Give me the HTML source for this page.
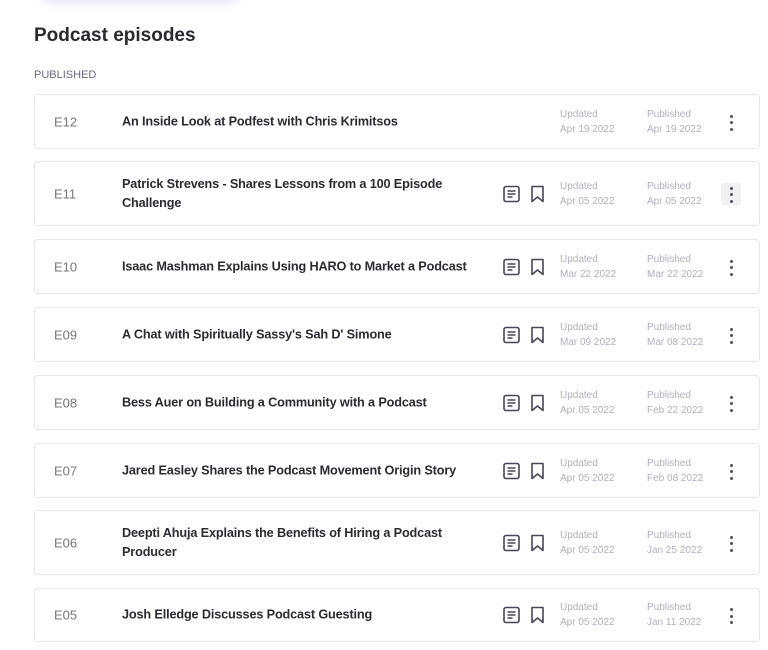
<!DOCTYPE html>
<html><head><meta charset="utf-8"><style>
body{margin:0;width:768px;height:650px;background:#fff;font-family:"Liberation Sans",sans-serif;position:relative;overflow:hidden}
.blob{position:absolute;left:40px;top:-20px;width:200px;height:20px;border-radius:10px;box-shadow:0 2px 10px rgba(150,130,230,.25);background:#fff}
h1{position:absolute;left:34px;top:25px;margin:0;font-size:19px;font-weight:bold;color:#2a2830}
.pub{position:absolute;left:34px;top:69px;font-size:11px;color:#6c6880}
.card{position:absolute;left:34px;width:726px;border:1px solid #e6e5ea;border-radius:4px;box-sizing:border-box;background:#fff}
.num{position:absolute;left:19px;top:50%;transform:translateY(-50%);font-size:13px;color:#777}
.title{position:absolute;left:87px;top:50%;transform:translateY(-50%);font-size:12.7px;letter-spacing:-0.15px;font-weight:bold;color:#2c2a33;line-height:19px;width:340px}
.ic{position:absolute;left:468px;top:50%;margin-top:-9px}
.d{position:absolute;top:50%;transform:translateY(-50%);font-size:10px;color:#b3afbd;line-height:15px}
.dots{position:absolute;left:686px;top:50%;margin-top:-11px;width:20px;height:22px;border-radius:3px}
.dots i{display:block;width:3px;height:3px;background:#555060;border-radius:50%;margin:3.5px auto 0}
.dots i:first-child{margin-top:4px}
</style></head><body>
<div class="blob"></div>
<h1>Podcast episodes</h1>
<div class="pub">PUBLISHED</div>

<div class="card" style="top:94px;height:55px"><div class="num">E12</div><div class="title">An Inside Look at Podfest with Chris Krimitsos</div><div class="d" style="left:525px">Updated<br>Apr 19 2022</div><div class="d" style="left:612px">Published<br>Apr 19 2022</div><div class="dots"><i></i><i></i><i></i></div></div>

<div class="card" style="top:161px;height:65px"><div class="num">E11</div><div class="title">Patrick Strevens - Shares Lessons from a 100 Episode Challenge</div>ICONS<div class="d" style="left:525px">Updated<br>Apr 05 2022</div><div class="d" style="left:612px">Published<br>Apr 05 2022</div><div class="dots" style="background:#f1f0f3"><i></i><i></i><i></i></div></div>

<div class="card" style="top:239px;height:55px"><div class="num">E10</div><div class="title" style="width:380px">Isaac Mashman Explains Using HARO to Market a Podcast</div>ICONS<div class="d" style="left:525px">Updated<br>Mar 22 2022</div><div class="d" style="left:612px">Published<br>Mar 22 2022</div><div class="dots"><i></i><i></i><i></i></div></div>

<div class="card" style="top:307px;height:55px"><div class="num">E09</div><div class="title">A Chat with Spiritually Sassy's Sah D' Simone</div>ICONS<div class="d" style="left:525px">Updated<br>Mar 09 2022</div><div class="d" style="left:612px">Published<br>Mar 08 2022</div><div class="dots"><i></i><i></i><i></i></div></div>

<div class="card" style="top:375px;height:55px"><div class="num">E08</div><div class="title">Bess Auer on Building a Community with a Podcast</div>ICONS<div class="d" style="left:525px">Updated<br>Apr 05 2022</div><div class="d" style="left:612px">Published<br>Feb 22 2022</div><div class="dots"><i></i><i></i><i></i></div></div>

<div class="card" style="top:443px;height:55px"><div class="num">E07</div><div class="title" style="width:380px">Jared Easley Shares the Podcast Movement Origin Story</div>ICONS<div class="d" style="left:525px">Updated<br>Apr 05 2022</div><div class="d" style="left:612px">Published<br>Feb 08 2022</div><div class="dots"><i></i><i></i><i></i></div></div>

<div class="card" style="top:510px;height:65px"><div class="num">E06</div><div class="title">Deepti Ahuja Explains the Benefits of Hiring a Podcast Producer</div>ICONS<div class="d" style="left:525px">Updated<br>Apr 05 2022</div><div class="d" style="left:612px">Published<br>Jan 25 2022</div><div class="dots"><i></i><i></i><i></i></div></div>

<div class="card" style="top:588px;height:54px"><div class="num">E05</div><div class="title">Josh Elledge Discusses Podcast Guesting</div>ICONS<div class="d" style="left:525px">Updated<br>Apr 05 2022</div><div class="d" style="left:612px">Published<br>Jan 11 2022</div><div class="dots"><i></i><i></i><i></i></div></div>
<script>
document.querySelectorAll('.card').forEach(function(c){c.innerHTML=c.innerHTML.replace('ICONS','<svg class="ic" width="44" height="18" viewBox="0 0 44 18" fill="none" stroke="#4a4558" stroke-width="1.6"><rect x="1" y="1.5" width="15" height="15" rx="2"/><path d="M4.5 6h8M4.5 9h8M4.5 12h5"/><path d="M29 1.5h11v15l-5.5-4.5-5.5 4.5z" stroke-linejoin="round"/></svg>')});
</script>
</body></html>
